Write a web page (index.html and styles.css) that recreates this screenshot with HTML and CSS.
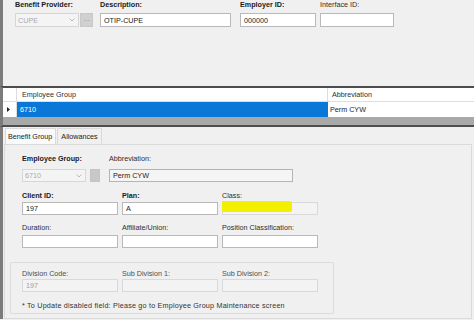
FILE: index.html
```
<!DOCTYPE html>
<html lang="en">
<head>
  <meta charset="UTF-8" />
  <title>Benefit Group</title>
  <link rel="stylesheet" href="styles.css">
</head>
<body>
  <div class="top-panel">
    <div class="top-row">
      <div class="field">
        <label class="bold">Benefit Provider:</label>
        <div class="picker">
          <div class="combo"><span>CUPE</span><svg width="6" height="4" viewBox="0 0 6 4"><polyline points="0.5,0.5 3,3 5.5,0.5" fill="none" stroke="#b4b4b4" stroke-width="0.9"/></svg></div>
          <button class="dots" disabled>...</button>
        </div>
      </div>
      <div class="field">
        <label class="bold">Description:</label>
        <input class="tall w-desc" value="OTIP-CUPE">
      </div>
      <div class="field">
        <label class="bold">Employer ID:</label>
        <input class="tall w-emp" value="000000">
      </div>
      <div class="field">
        <label>Interface ID:</label>
        <input class="tall w-iface" value="">
      </div>
    </div>
  </div>

  <div class="grid">
    <div class="grid-row head">
      <div class="sel"></div>
      <div class="col-group">Employee Group</div>
      <div class="col-abbr">Abbreviation</div>
    </div>
    <div class="grid-row data">
      <div class="sel"><svg width="3" height="5" viewBox="0 0 3 5"><polygon points="0,0 3,2.5 0,5" fill="#222"/></svg></div>
      <div class="col-group selected">6710</div>
      <div class="col-abbr">Perm CYW</div>
    </div>
    <div class="grid-empty"></div>
  </div>

  <div class="detail">
    <div class="tabs">
      <div class="tab active">Benefit Group</div>
      <div class="tab">Allowances</div>
    </div>
    <div class="tab-page">
      <div class="row-first">
        <div class="field">
          <label class="bold">Employee Group:</label>
          <div class="picker">
            <div class="combo"><span>6710</span><svg width="6" height="4" viewBox="0 0 6 4"><polyline points="0.5,0.5 3,3 5.5,0.5" fill="none" stroke="#b4b4b4" stroke-width="0.9"/></svg></div>
            <button class="dots small" disabled></button>
          </div>
        </div>
        <div class="field abbr-field">
          <label>Abbreviation:</label>
          <input class="readonly w-abbr" value="Perm CYW" readonly>
        </div>
      </div>

      <div class="form-row gap-client">
        <div class="field">
          <label class="bold">Client ID:</label>
          <input value="197">
        </div>
        <div class="field">
          <label class="bold">Plan:</label>
          <input value="A">
        </div>
        <div class="field">
          <label>Class:</label>
          <div class="box disabled"><span class="highlight"></span></div>
        </div>
      </div>

      <div class="form-row gap-duration">
        <div class="field">
          <label>Duration:</label>
          <input value="">
        </div>
        <div class="field">
          <label>Affiliate/Union:</label>
          <input value="">
        </div>
        <div class="field">
          <label>Position Classification:</label>
          <input value="">
        </div>
      </div>

      <div class="group">
        <div class="form-row division">
          <div class="field">
            <label class="muted">Division Code:</label>
            <input class="disabled" value="197" disabled>
          </div>
          <div class="field">
            <label class="muted">Sub Division 1:</label>
            <input class="disabled" value="" disabled>
          </div>
          <div class="field">
            <label class="muted">Sub Division 2:</label>
            <input class="disabled" value="" disabled>
          </div>
        </div>
        <p class="note">* To Update disabled field: Please go to Employee Group Maintenance screen</p>
      </div>
    </div>
  </div>
</body>
</html>
```

FILE: styles.css
```
body {
  margin: 0;
  width: 474px;
  height: 320px;
  overflow: hidden;
  background-color: #f0f0f0;
  font-family: "Liberation Sans", Arial, sans-serif;
  font-size: 7.2px;
  color: #2e2e2e;
}

label {
  display: block;
  height: 8px;
  line-height: 8px;
  white-space: nowrap;
}

.bold {
  font-weight: bold;
  color: #1a1a1a;
}

.muted {
  color: #4e4e4e;
}

input {
  display: block;
  box-sizing: border-box;
  width: 96px;
  height: 13px;
  margin: 0;
  padding: 0 3px;
  border: 1px solid #b9b9b9;
  background-color: #fff;
  font-family: inherit;
  font-size: 7.2px;
  color: #222;
  outline: none;
}

input.tall {
  height: 14px;
}

input.readonly {
  background-color: #f5f5f5;
  border-color: #b4b4b4;
}

input.disabled,
.box.disabled {
  background-color: #f3f3f3;
  border: 1px solid #d9d9d9;
  color: #a0a0a0;
}

.box {
  box-sizing: border-box;
  position: relative;
  width: 96px;
  height: 13px;
}

.highlight {
  position: absolute;
  left: -1px;
  top: -2px;
  width: 70px;
  height: 11px;
  background-color: #f2f000;
  border-radius: 0 3px 2px 0;
}

/* top panel */
.top-panel {
  height: 86px;
  box-sizing: border-box;
  border-left: 3px solid #7c7c7c;
  padding: 1px 0 0 12px;
}

.top-row {
  display: grid;
  grid-template-columns: 85px 140px 80px 74px;
}

.top-row label {
  margin-bottom: 4px;
}

.w-desc { width: 131px; }
.w-emp { width: 76px; }
.w-iface { width: 74px; }
.w-abbr { width: 184px; }

.picker {
  display: flex;
  align-items: stretch;
  gap: 1px;
  height: 14px;
}

.combo {
  box-sizing: border-box;
  width: 64px;
  display: flex;
  align-items: center;
  justify-content: space-between;
  padding: 0 3px 0 2px;
  border: 1px solid #d6d6d6;
  background-color: #f4f4f4;
  color: #ababab;
}

.dots {
  width: 13px;
  margin: 0;
  padding: 0 0 3px;
  border: 1px solid #c8c8c8;
  background-color: #d0d0d0;
  color: #8c8c8c;
  font-family: inherit;
  font-size: 7px;
  line-height: 8px;
}

/* grid */
.grid {
  border-top: 2px solid #4d4d4d;
  border-bottom: 2px solid #4d4d4d;
  border-left: 3px solid #7c7c7c;
  background-color: #a9a9a9;
}

.grid-row {
  display: flex;
  background-color: #fff;
}

.grid-row.head {
  height: 13px;
  line-height: 13px;
  border-bottom: 1px solid #dedede;
}

.grid-row.data {
  height: 15px;
  line-height: 15px;
}

.sel {
  width: 14px;
  box-sizing: border-box;
  border-right: 1px solid #dcdcdc;
  display: flex;
  align-items: center;
  padding-left: 4px;
}

.col-group {
  width: 311px;
  box-sizing: border-box;
  padding-left: 5px;
  border-right: 1px solid #dcdcdc;
}

.col-abbr {
  flex: 1;
  padding-left: 4px;
}

.grid-row.data .col-abbr {
  padding-left: 2px;
  color: #222;
}

.col-group.selected {
  background-color: #0a78d6;
  color: #fff;
  padding-left: 3px;
  border-right: none;
}

.grid-empty {
  height: 8px;
}

/* detail with tabs */
.detail {
  border-left: 3px solid #7c7c7c;
  padding-top: 1px;
}

.tabs {
  display: flex;
  height: 16px;
  padding-left: 2px;
  gap: 1px;
}

.tab {
  box-sizing: border-box;
  height: 16px;
  line-height: 15px;
  padding: 0 3px;
  border: 1px solid #dadada;
  border-bottom: none;
  background-color: #f0f0f0;
  color: #222;
  white-space: nowrap;
}

.tab.active {
  padding: 0 3px 0 2px;
  background-color: #fafafa;
}

.tab-page {
  height: 175px;
  box-sizing: border-box;
  margin: 0 2px 0 1px;
  padding: 10px 0 0 5px;
  border: 1px solid #dadada;
}

.row-first {
  display: flex;
  padding-left: 12px;
}

.row-first label {
  margin-bottom: 6px;
}

.row-first .picker {
  height: 13px;
  gap: 4px;
}

.dots.small {
  width: 10px;
  padding: 0;
  border-color: #c4c4c4;
  background-color: #c8c8c8;
}

.abbr-field {
  margin-left: 9px;
}

.form-row {
  display: grid;
  grid-template-columns: 100px 100px 96px;
  padding-left: 12px;
}

.gap-client {
  margin-top: 10px;
}

.gap-client label {
  margin-bottom: 2px;
}

.gap-duration {
  margin-top: 9px;
}

.gap-duration label {
  margin-bottom: 3px;
}

.group {
  width: 324px;
  box-sizing: border-box;
  margin-top: 14px;
  padding: 7px 0 3px 11px;
  border: 1px solid #dcdcdc;
  border-radius: 2px;
}

.form-row.division {
  padding-left: 0;
}

.division label {
  margin-bottom: 1px;
}

.note {
  margin: 10px 0 0;
  height: 8px;
  line-height: 8px;
  letter-spacing: 0.2px;
  color: #333;
}
```
